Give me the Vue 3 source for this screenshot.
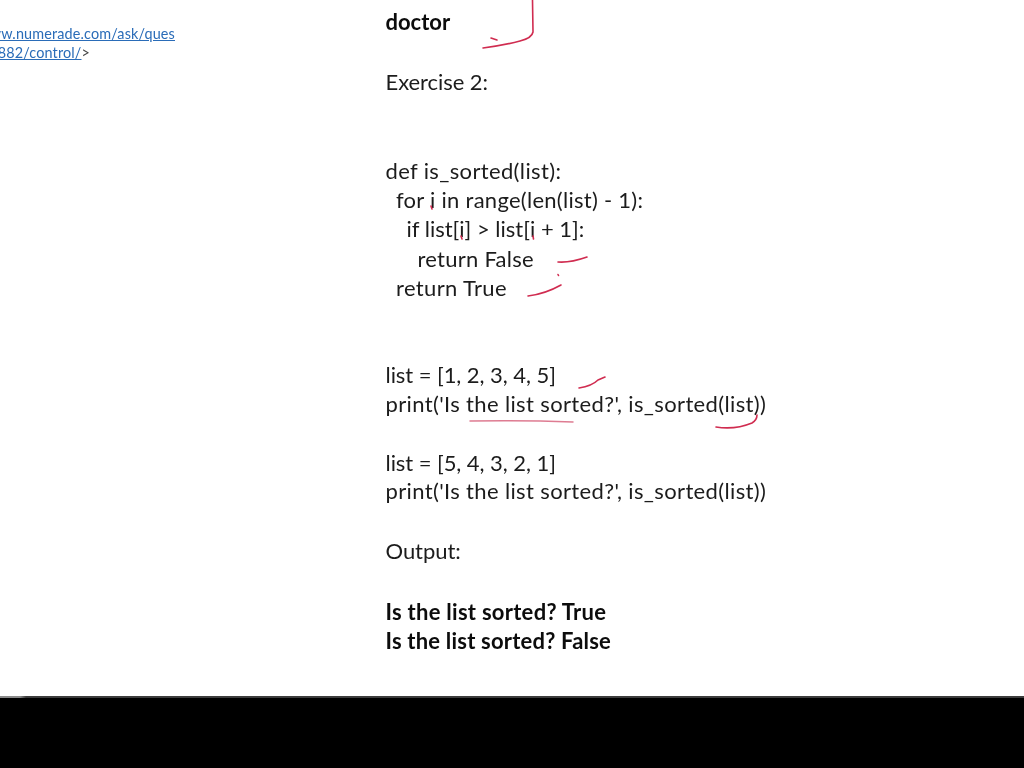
<script setup>
const blocks = [
  { cls: 'b-doctor bold', lines: [['doctor', '']] },
  { cls: 'b-ex', lines: [['Exercise 2:', 'tight']] },
  { cls: 'b-def', lines: [
    ['def is_sorted(list):', 'wide'],
    ['for i in range(len(list) - 1):', 'mid in1'],
    ['if list[i] > list[i + 1]:', 'in2'],
    ['return False', 'low in3'],
    ['return True', 'wide in1'],
  ] },
  { cls: 'b-list', lines: [['list = [1, 2, 3, 4, 5]', 'tight'], ["print('Is the list sorted?', is_sorted(list))", 'wide']] },
  { cls: 'b-list2', lines: [['list = [5, 4, 3, 2, 1]', 'tight'], ["print('Is the list sorted?', is_sorted(list))", 'wide']] },
  { cls: 'b-out', lines: [['Output:', 'tight']] },
  { cls: 'b-res bold', lines: [['Is the list sorted? True', 'mid'], ['Is the list sorted? False', 'slight']] },
]
const strokes = [
  'M532.5 0 L533 32 Q532 38 520 41 Q505 45 483 48',
  'M491 38 L497 40',
  'M558 262 Q570 263 587 257',
  'M528 296 Q545 294 561 285',
  'M558 274.5 L558.5 275.5',
  'M431 206 L432 209',
  'M461 236 L462 239',
  'M533 236 L533.5 239',
  'M579 388 Q592 386 598 380 L605 377',
  'M716 427 Q735 430 752 423 Q757 420 757 415',
]
</script>

<template>
  <div class="page">
    <main class="sheet">
      <aside class="links">
        <div class="link-line first"><a class="link">www.numerade.com/ask/ques</a></div>
        <div class="link-line second"><a class="link">3882/control/</a><span class="gt">&gt;</span></div>
      </aside>
      <section class="doc">
        <div v-for="(b, i) in blocks" :key="i" class="block" :class="b.cls">
          <div v-for="(l, j) in b.lines" :key="j" class="line" :class="l[1]">{{ l[0] }}</div>
        </div>
      </section>
      <svg class="ink" width="1024" height="696" viewBox="0 0 1024 696" fill="none">
        <path v-for="(d, i) in strokes" :key="i" :d="d" class="stroke" />
        <path d="M470 421 Q520 420 573 422" class="stroke faint" />
      </svg>
    </main>
    <footer class="band"><div class="band-edge"></div></footer>
  </div>
</template>

<style scoped>
.page {
  width: 1024px;
  height: 768px;
  overflow: hidden;
  display: flex;
  flex-direction: column;
  background: #fff;
  font-family: Lato, "Open Sans", sans-serif;
  color: #1c1c1c;
}
.sheet {
  position: relative;
  height: 696px;
  display: flex;
  overflow: hidden;
}
.links {
  width: 385.5px;
  flex: none;
  padding-top: 24px;
  font-size: 14.4px;
  line-height: 19px;
  letter-spacing: 0.15px;
  filter: blur(0.3px);
}
.link-line {
  display: flex;
  justify-content: flex-end;
  overflow: hidden;
  white-space: nowrap;
}
.link-line.first { width: 175px; }
.link-line.second { width: 90px; }
.link { color: #2a6cb8; text-decoration: underline; }
.gt { color: #444; }
.doc {
  flex: 1;
  padding-top: 7px;
  font-size: 22px;
  line-height: 29.2px;
  white-space: pre;
  filter: blur(0.3px);
}
.line { height: 29.2px; }
.line.wide { letter-spacing: 0.36px; }
.line.mid { letter-spacing: 0.27px; }
.line.slight { letter-spacing: 0.2px; }
.line.low { letter-spacing: 0.25px; }
.line.tight { letter-spacing: -0.06px; }
.line.in1 { padding-left: 10.5px; }
.line.in2 { padding-left: 21px; }
.line.in3 { padding-left: 32px; }
.bold { font-weight: 700; color: #0c0c0c; }
.b-ex { margin-top: 30.8px; }
.b-def { margin-top: 59.8px; }
.b-list { margin-top: 58px; }
.b-list2 { margin-top: 30.3px; }
.b-list2 .line { height: 28.3px; line-height: 28.3px; }
.b-out { margin-top: 31px; }
.b-res { margin-top: 31.8px; }
.b-res .line { height: 29px; line-height: 29px; }
.ink {
  position: absolute;
  top: 0;
  left: 0;
  pointer-events: none;
}
.stroke {
  stroke: #d02c50;
  stroke-width: 1.6;
  stroke-linecap: round;
  stroke-linejoin: round;
}
.stroke.faint {
  stroke: #de7c92;
  stroke-width: 1.5;
}
.band {
  flex: 1;
  background: #000;
}
.band-edge {
  height: 2px;
  background: linear-gradient(90deg, #8a8a8a 0, #8a8a8a 20px, #3c3c3c 26px, #3c3c3c 100%);
}
</style>
